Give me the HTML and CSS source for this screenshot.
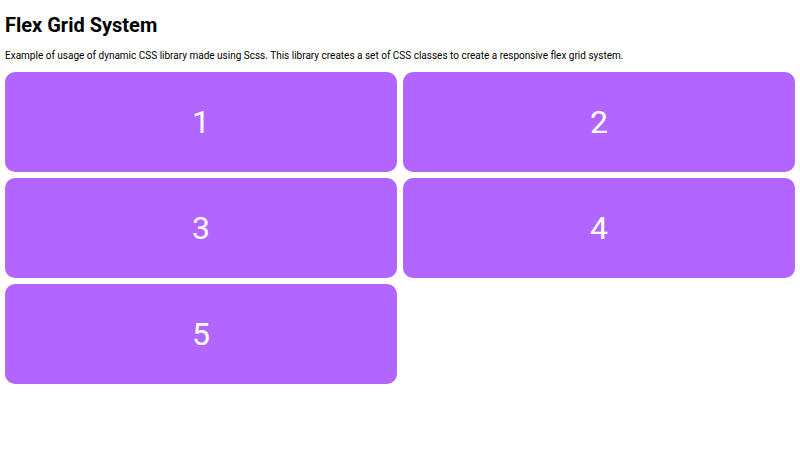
FILE: index.html
```html
<!DOCTYPE html>
<html lang="en">
<head>
<meta charset="utf-8">
<title>Flex Grid System</title>
<link rel="stylesheet" href="styles.css">
</head>
<body>
  <main class="page">
    <h1 class="title">Flex Grid System</h1>
    <p class="intro">Example of usage of dynamic CSS library made using Scss. This library creates a set of CSS classes to create a responsive flex grid system.</p>
    <div class="row">
      <div class="col-6"><div class="cell">1</div></div>
      <div class="col-6"><div class="cell">2</div></div>
      <div class="col-6"><div class="cell">3</div></div>
      <div class="col-6"><div class="cell">4</div></div>
      <div class="col-6"><div class="cell">5</div></div>
    </div>
  </main>
</body>
</html>
```
FILE: styles.css
```css
html, body {
  margin: 0;
  padding: 0;
  background: #ffffff;
}

body {
  font-family: Roboto, "Liberation Sans", sans-serif;
  color: #000000;
}

.page {
  padding: 13px 5px 0;
}

.title {
  margin: 0;
  font-size: 20px;
  font-weight: 700;
  line-height: 24px;
}

.intro {
  margin: 12px 0 0;
  font-size: 10px;
  line-height: 14px;
}

.row {
  display: flex;
  flex-wrap: wrap;
  gap: 6px;
  margin-top: 9px;
}

.col-6 {
  flex: 0 0 calc(50% - 3px);
}

.cell {
  height: 100px;
  border-radius: 10px;
  background: #b266ff;
  color: #ffffff;
  font-size: 32px;
  display: flex;
  align-items: center;
  justify-content: center;
}
```
